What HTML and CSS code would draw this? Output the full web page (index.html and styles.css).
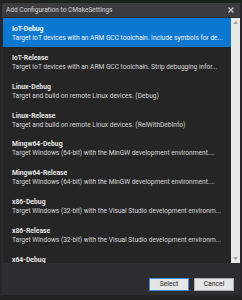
FILE: index.html
```html
<!DOCTYPE html>
<html>
<head>
<meta charset="utf-8">
<link rel="stylesheet" href="styles.css">
</head>
<body>
<div class="dialog">
  <div class="titlebar">
    <span class="title">Add Configuration to CMakeSettings</span>
    <svg class="close" width="6" height="6" viewBox="0 0 6 6"><path d="M0.5 0.5 L5.5 5.5 M5.5 0.5 L0.5 5.5" stroke="#d0d0d0" stroke-width="1.1"/></svg>
  </div>
  <div class="listwrap">
    <ul class="list">
      <li class="item selected"><div class="name">IoT-Debug</div><div class="desc">Target IoT devices with an ARM GCC toolchain. Include symbols for de...</div></li>
      <li class="item"><div class="name">IoT-Release</div><div class="desc">Target IoT devices with an ARM GCC toolchain. Strip debugging infor...</div></li>
      <li class="item"><div class="name">Linux-Debug</div><div class="desc">Target and build on remote Linux devices. (Debug)</div></li>
      <li class="item"><div class="name">Linux-Release</div><div class="desc">Target and build on remote Linux devices. (RelWithDebInfo)</div></li>
      <li class="item"><div class="name">Mingw64-Debug</div><div class="desc">Target Windows (64-bit) with the MinGW development environment....</div></li>
      <li class="item"><div class="name">Mingw64-Release</div><div class="desc">Target Windows (64-bit) with the MinGW development environment....</div></li>
      <li class="item"><div class="name">x86-Debug</div><div class="desc">Target Windows (32-bit) with the Visual Studio development environm...</div></li>
      <li class="item"><div class="name">x86-Release</div><div class="desc">Target Windows (32-bit) with the Visual Studio development environm...</div></li>
      <li class="item"><div class="name">x64-Debug</div><div class="desc">Target Windows (64-bit) with the Visual Studio development environm...</div></li>
    </ul>
    <div class="scrollbar">
      <svg width="5" height="3" viewBox="0 0 5 3"><path d="M0 3 L2.5 0 L5 3 Z" fill="#a0a0a0"/></svg>
      <svg width="5" height="3" viewBox="0 0 5 3"><path d="M0 0 L2.5 3 L5 0 Z" fill="#a0a0a0"/></svg>
    </div>
  </div>
  <div class="footer">
    <button class="btn primary">Select</button>
    <button class="btn">Cancel</button>
  </div>
</div>
</body>
</html>
```
FILE: styles.css
```css
html, body {
  margin: 0;
  padding: 0;
  background: #1e221e;
  width: 242px;
  height: 300px;
  overflow: hidden;
  font-family: Roboto, "Open Sans", sans-serif;
}
.dialog {
  margin-top: 3px;
  height: 294px;
  background: #2d2d30;
  border-left: 2px solid #262628;
  border-right: 2px solid #262628;
  display: flex;
  flex-direction: column;
}
.titlebar {
  height: 14px;
  background: #3c3c3f;
  display: flex;
  align-items: center;
  justify-content: space-between;
  padding: 0 6px 0 4px;
}
.title {
  color: #d6d6d6;
  font-size: 6.6px;
  line-height: 14px;
}
.close { display: block; }
.listwrap {
  margin: 1px 0 0 1px;
  height: 245px;
  display: flex;
  background: #252526;
  overflow: hidden;
}
.list {
  list-style: none;
  margin: 0;
  padding: 0;
  flex: 1;
  min-width: 0;
}
.item {
  height: 28.8px;
  padding: 6px 4px 0 9px;
  box-sizing: border-box;
  color: #e6e6e6;
}
.item.selected {
  height: 29px;
  background: #0a78d0;
  color: #ffffff;
}
.name {
  font-weight: bold;
  font-size: 6.8px;
  line-height: 10px;
}
.desc {
  font-size: 6.6px;
  line-height: 9px;
  white-space: nowrap;
  color: #d8d8d8;
}
.item.selected .desc { color: #f0f4fa; }
.scrollbar {
  width: 9px;
  background: #e8e8e8;
  display: flex;
  flex-direction: column;
  justify-content: space-between;
  align-items: center;
  padding: 3px 0;
  box-sizing: border-box;
}
.scrollbar svg { display: block; }
.footer {
  flex: 1;
  display: flex;
  justify-content: flex-end;
  align-items: flex-start;
  gap: 5px;
  padding: 15px 6px 0 0;
  border-bottom: 2px solid #232325;
}
.btn {
  width: 40px;
  height: 13px;
  padding: 0;
  margin: 0;
  font-family: Roboto, "Open Sans", sans-serif;
  font-size: 6.8px;
  line-height: 11px;
  color: #1e1e1e;
  background: #e5e5e5;
  border: 1px solid #adadad;
}
.btn.primary {
  border-color: #3a8ee6;
}
```
